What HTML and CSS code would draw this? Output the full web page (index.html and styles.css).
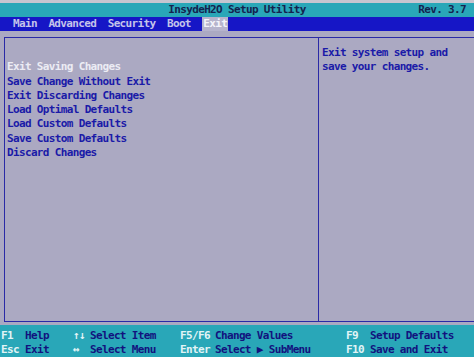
FILE: index.html
```html
<!DOCTYPE html>
<html>
<head>
  <meta name="viewport" content="width=device-width, initial-scale=1.0">
  <link rel="stylesheet" href="styles.css">
</head>
<body>
  <div class="top-strip"></div>
  <div class="titlebar">
    <span></span>
    <span class="title">InsydeH2O Setup Utility</span>
    <span class="rev">Rev. 3.7</span>
  </div>
  <div class="menubar">
    <span class="tab">Main</span>
    <span class="tab">Advanced</span>
    <span class="tab">Security</span>
    <span class="tab">Boot</span>
    <span class="tab active">Exit</span>
  </div>
  <div class="main">
    <div class="panel">
      <div class="items">
        <div class="item blank">&nbsp;</div>
        <div class="item selected">Exit Saving Changes</div>
        <div class="item">Save Change Without Exit</div>
        <div class="item">Exit Discarding Changes</div>
        <div class="item">Load Optimal Defaults</div>
        <div class="item">Load Custom Defaults</div>
        <div class="item">Save Custom Defaults</div>
        <div class="item">Discard Changes</div>
      </div>
      <div class="help">
        <div class="help-text">Exit system setup and save your changes.</div>
      </div>
    </div>
  </div>
  <div class="footer">
    <span class="key">F1</span><span class="desc">Help</span>
    <span class="key">&#8593;&#8595;</span><span class="desc">Select Item</span>
    <span class="key">F5/F6</span><span class="desc">Change Values</span>
    <span class="key">F9</span><span class="desc">Setup Defaults</span>
    <span class="key">Esc</span><span class="desc">Exit</span>
    <span class="key">&#8596;</span><span class="desc">Select Menu</span>
    <span class="key">Enter</span><span class="desc">Select &#9654; SubMenu</span>
    <span class="key">F10</span><span class="desc">Save and Exit</span>
  </div>
</body>
</html>
```

FILE: styles.css
```css
html, body {
  margin: 0;
  padding: 0;
  width: 100%;
  height: 100%;
  overflow: hidden;
}
body {
  display: flex;
  flex-direction: column;
  background: #aba9c2;
  font-family: "DejaVu Sans Mono", "Liberation Mono", monospace;
  font-size: 11px;
  font-weight: bold;
  letter-spacing: -0.65px;
  line-height: 14px;
  color: #1a1aa8;
}
.top-strip {
  height: 3px;
  background: #c6c5d0;
}
.titlebar {
  height: 14px;
  background: #29a7b8;
  display: grid;
  grid-template-columns: 1fr auto 1fr;
  color: #14224e;
}
.rev {
  text-align: right;
  padding-right: 8px;
}
.menubar {
  height: 14px;
  background: #1616c6;
  display: flex;
  gap: 11.5px;
  padding-left: 13px;
  color: #c4c4ea;
}
.tab.active {
  background: #b6b4cc;
  color: #f4f4fa;
  padding: 0 1px;
}
.main {
  flex: 1;
  display: flex;
  padding: 6px 0 3px 4px;
}
.panel {
  flex: 1;
  display: grid;
  grid-template-columns: 314px 1fr;
  border: 1px solid #2a2aa6;
  border-right: none;
}
.items {
  border-right: 1px solid #2a2aa6;
  padding: 8px 0 0 2px;
}
.item {
  line-height: 14.3px;
}
.item.selected {
  color: #ececf4;
}
.help {
  padding: 8px 0 0 3px;
}
.help-text {
  width: 140px;
  line-height: 14px;
}
.footer {
  height: 32px;
  box-sizing: border-box;
  background: #29a7b8;
  padding: 4px 0 0 1px;
  display: grid;
  grid-template-columns: 24px 48px 17px 90px 35px 131px 24px 1fr;
  grid-auto-rows: 13.5px;
  line-height: 13.5px;
  white-space: nowrap;
}
.footer .key {
  color: #e2f4f6;
}
.footer .desc {
  color: #12127e;
}
```
